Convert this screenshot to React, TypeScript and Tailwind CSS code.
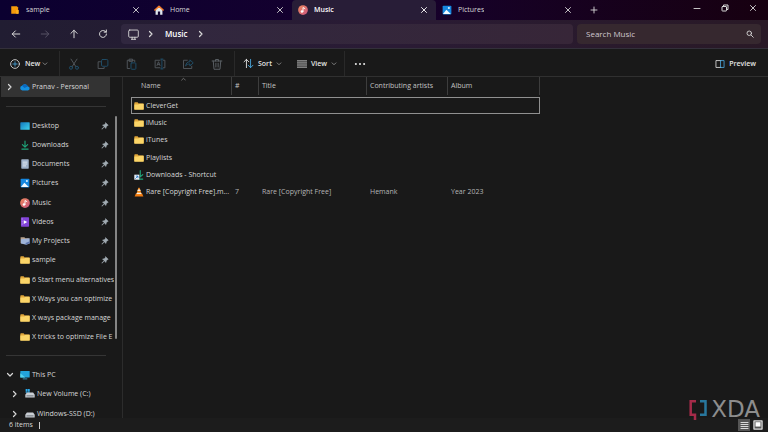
import type { ReactNode } from "react";

type IconProps = { className?: string };

function Svg({ children, className = "size-3", box = 16 }: IconProps & { children: ReactNode; box?: number }) {
  return (
    <svg viewBox={`0 0 ${box} ${box}`} className={`shrink-0 ${className}`} fill="none" stroke="currentColor" strokeWidth="1.3" strokeLinecap="round" strokeLinejoin="round" aria-hidden="true">
      {children}
    </svg>
  );
}

const Close = () => <Svg className="size-2"><path d="M3 3l10 10M13 3l-10 10" strokeWidth="1.800" /></Svg>;
const ChevronRight = ({ className = "size-2" }: IconProps) => <Svg className={className}><path d="M5 3l5 5-5 5" strokeWidth="2.400" /></Svg>;
const ChevronDown = ({ className = "size-2" }: IconProps) => <Svg className={className}><path d="M3 5l5 5 5-5" strokeWidth="2.400" /></Svg>;

const Folder = () => (
  <Svg className="size-[10px]">
    <path d="M.5 3.200c0-.700.500-1.200 1.200-1.200h4L7.500 4h6.800c.700 0 1.200.500 1.200 1.200V13H.5z" fill="#e0a63a" stroke="none" />
    <path d="M.5 5.500h6.500l1.500-1H15.500v8.500c0 .600-.400 1-1 1h-13c-.600 0-1-.400-1-1z" fill="#fbd568" stroke="none" />
  </Svg>
);
const SampleIcon = () => (
  <Svg className="size-[10px]">
    <path d="M2 2h9l2 2v10H2z" fill="#f59a0b" stroke="none" />
    <path d="M10 8h4v6h-4z" fill="#ffb01f" stroke="none" />
  </Svg>
);
const HomeIcon = () => (
  <Svg className="size-[10px]">
    <path d="M2.500 7L8 2.500 13.500 7v8.500H9.800v-5H6.200v5H2.500z" fill="#dfe5ec" stroke="none" />
    <path d="M1.500 8L8 2l6.500 6" stroke="#f27a2a" strokeWidth="2.600" />
  </Svg>
);
const MusicIcon = () => (
  <Svg className="size-[10px]">
    <defs>
      <linearGradient id="music" x1="0" y1="0" x2="1" y2="1"><stop stopColor="#f08a5d" /><stop offset="1" stopColor="#c8557f" /></linearGradient>
    </defs>
    <circle cx="8" cy="8" r="7.800" fill="url(#music)" stroke="none" />
    <circle cx="6.300" cy="10.500" r="2" fill="#fff" stroke="none" />
    <path d="M8 10.500V4l3 1.800" stroke="#fff" strokeWidth="1.500" />
  </Svg>
);
const PicturesIcon = () => (
  <Svg className="size-[10px]">
    <rect x="1" y="1" width="14" height="14" rx="1.500" fill="#1687df" stroke="none" />
    <path d="M1.500 14.500L7 7.500l7 7z" fill="#f2f9ff" stroke="none" />
    <circle cx="11" cy="4.800" r="1.700" fill="#d9f1ff" stroke="none" />
  </Svg>
);
const CloudIcon = () => (
  <Svg className="size-[10px]">
    <path d="M3.800 13.500a3.800 3.800 0 01-.500-7.500A5.200 5.200 0 0112.600 7 3.300 3.300 0 0112.800 13.500z" fill="#1490df" stroke="none" />
    <path d="M3.300 6a5.200 5.200 0 019.300 1L7 9.500z" fill="#0b68bd" stroke="none" />
  </Svg>
);
const DesktopIcon = () => (
  <Svg className="size-[10px]">
    <defs>
      <linearGradient id="desk" x1="0" y1="0" x2="1" y2="1"><stop stopColor="#1277bd" /><stop offset="1" stopColor="#3fd4ef" /></linearGradient>
    </defs>
    <rect x="0.500" y="2" width="15" height="12" rx="1" fill="url(#desk)" stroke="none" />
  </Svg>
);
const DownloadIcon = () => (
  <Svg className="size-[10px]"><path d="M8 1.500v9.500M3.800 7.500L8 11.500l4.200-4M3 14.500h10" stroke="#1fa67a" strokeWidth="1.800" /></Svg>
);
const DocumentsIcon = () => (
  <Svg className="size-[10px]">
    <rect x="2" y="0.500" width="12" height="15" rx="1" fill="#9db1c9" stroke="none" />
    <path d="M5 5h6M5 8h6M5 11h4" stroke="#eef4fa" />
  </Svg>
);
const VideosIcon = () => (
  <Svg className="size-[10px]">
    <rect x="1.500" y="0.500" width="13" height="15" rx="1.200" fill="#8244d8" stroke="none" />
    <path d="M6 5l5.500 3L6 11z" fill="#fff" stroke="none" />
    <path d="M3.500 2.500v11" stroke="#b78cf3" strokeDasharray="1.500 2.500" />
  </Svg>
);
const ProjectsIcon = () => (
  <Svg className="size-[10px]">
    <path d="M1 2h6l1.500 1.500H14v8H1z" fill="#b9a48f" stroke="none" />
    <path d="M1.500 5L15.500 3.500v8.500L10 14 1.500 12z" fill="#9fb4d8" stroke="none" />
    <path d="M9 14l6.500-2.500V8.500L9 11z" fill="#5d74ab" stroke="none" />
  </Svg>
);
const PcIcon = () => (
  <Svg className="size-[10px]">
    <rect x="0.500" y="1.500" width="15" height="10.500" rx="1" fill="#22a3dc" stroke="none" />
    <path d="M.5 12V5l8 7z" fill="#53d2ee" stroke="none" />
    <path d="M5 14.200h6" stroke="#3b8fb5" strokeWidth="1.600" />
  </Svg>
);
const DriveIcon = ({ system }: { system?: boolean }) => (
  <Svg className="size-[10px]">
    {system && <path d="M1 0h3v3H1zM4.600 0h3v3h-3zM1 3.600h3v2.400H1zM4.600 3.600h3v2.400h-3z" fill="#28a8ea" stroke="none" />}
    <path d="M3 5.500h10L15.500 9v4.500H.5V9z" fill="#c9ced4" stroke="none" />
    <path d="M3 11h10" stroke="#4d5359" strokeWidth="1.200" />
  </Svg>
);
const ShortcutIcon = () => (
  <Svg className="size-[10px]">
    <path d="M10 1v9.500M10 11l4-3.500M8 14.500h6" stroke="#1fa67a" strokeWidth="1.800" />
    <rect x="0.500" y="7.500" width="8" height="8" fill="#f2f6fa" stroke="none" />
    <path d="M2.500 13.500l3.500-3.500M3.500 9.700H6.300v2.800" stroke="#1c6fc4" />
  </Svg>
);
const VlcIcon = () => (
  <Svg className="size-[10px]">
    <path d="M3 10.500h10l2 4.500H1z" fill="#f07a10" stroke="none" />
    <path d="M7 1h2l3.500 11.500h-9z" fill="#f58b1c" stroke="none" />
    <path d="M6.200 4h3.600l.8 2.500H5.400zM4.600 9h6.800l.6 2H4z" fill="#f2eee8" stroke="none" />
  </Svg>
);
const PinIcon = () => (
  <Svg className="size-2">
    <path d="M9.500 1.500l5 5-1.500.800-2.500 2.200-.500 3.500L6.700 9.800 2 14.500 1.500 14l4.700-4.700L3 6l3.500-.500L8.700 3z" fill="#a1abb2" stroke="#a1abb2" strokeWidth="1" />
  </Svg>
);

type Tab = { label: string; icon: ReactNode; active?: boolean };
const tabs: Tab[] = [
  { label: "sample", icon: <SampleIcon /> },
  { label: "Home", icon: <HomeIcon /> },
  { label: "Music", icon: <MusicIcon />, active: true },
  { label: "Pictures", icon: <PicturesIcon /> },
];

const quickAccess: { label: string; icon: ReactNode; pinned?: boolean }[] = [
  { label: "Desktop", icon: <DesktopIcon />, pinned: true },
  { label: "Downloads", icon: <DownloadIcon />, pinned: true },
  { label: "Documents", icon: <DocumentsIcon />, pinned: true },
  { label: "Pictures", icon: <PicturesIcon />, pinned: true },
  { label: "Music", icon: <MusicIcon />, pinned: true },
  { label: "Videos", icon: <VideosIcon />, pinned: true },
  { label: "My Projects", icon: <ProjectsIcon />, pinned: true },
  { label: "sample", icon: <Folder />, pinned: true },
  { label: "6 Start menu alternatives", icon: <Folder /> },
  { label: "X Ways you can optimize", icon: <Folder /> },
  { label: "X ways package manage", icon: <Folder /> },
  { label: "X tricks to optimize File E", icon: <Folder /> },
];

const files: { name: string; icon: ReactNode; selected?: boolean; num?: string; title?: string; artist?: string; album?: string }[] = [
  { name: "CleverGet", icon: <Folder />, selected: true },
  { name: "iMusic", icon: <Folder /> },
  { name: "iTunes", icon: <Folder /> },
  { name: "Playlists", icon: <Folder /> },
  { name: "Downloads - Shortcut", icon: <ShortcutIcon /> },
  { name: "Rare [Copyright Free].m...", icon: <VlcIcon />, num: "7", title: "Rare [Copyright Free]", artist: "Hemank", album: "Year 2023" },
];

const toolIcons: { label: string; icon: ReactNode }[] = [
  { label: "Cut", icon: <Svg><path d="M4 1.500l6.500 10M12 1.500l-6.500 10" stroke="#50555a" /><circle cx="4" cy="13" r="2" stroke="#204d68" /><circle cx="12" cy="13" r="2" stroke="#204d68" /></Svg> },
  { label: "Copy", icon: <Svg><path d="M4.500 5H1.500v9h8v-1.500" stroke="#50555a" /><rect x="6" y="2" width="8.500" height="9" rx="1.500" stroke="#204d68" /></Svg> },
  { label: "Paste", icon: <Svg><path d="M6 14H3V3h10v2M6 1.500h4v3H6z" stroke="#50555a" /><rect x="8" y="6.500" width="6.500" height="8.500" rx="1" stroke="#204d68" /></Svg> },
  { label: "Rename", icon: <Svg><path d="M8 3H1.500v10H8M12.500 3h2v10h-2M4 10l2-5 2 5M4.500 8.500h3" stroke="#50555a" /><path d="M10.500 1.500v13M9 1.500h3M9 14.500h3" stroke="#204d68" /></Svg> },
  { label: "Share", icon: <Svg><path d="M7 3H2v11h11v-3" stroke="#50555a" /><path d="M5 10c.500-3.500 2.500-5 5.500-5V2.500L15 6.500l-4.500 4V8C8 8 6.500 8.500 5 10z" stroke="#204d68" /></Svg> },
  { label: "Delete", icon: <Svg><path d="M1.500 4h13M6 4V2h4v2M3 4l1 11h8l1-11M6.500 7v5M9.500 7v5" stroke="#5c6166" /></Svg> },
];

const iconButton = "flex size-5 items-center justify-center";
const windowButton = "flex w-7 items-center justify-center pb-1";

export default function App() {
  return (
    <div className="flex h-screen min-h-[300px] flex-col overflow-hidden bg-[#191919] font-['Open_Sans','Noto_Sans',sans-serif] text-[7px] leading-3 text-[#d8d8d8]">
      <header className="shrink-0">
        <div className="flex h-5 bg-linear-to-r from-[#0b0030] via-[#16002e] to-[#170010] pr-px pl-1">
          <div role="tablist" className="flex w-[576px] min-w-0 shrink">
            {tabs.map((tab) => (
              <div
                key={tab.label}
                className={`flex min-w-0 flex-1 items-center pr-2 pl-[6px] ${tab.active ? "rounded-t-sm bg-[#281d37] font-semibold text-white" : ""}`}
              >
                <button role="tab" aria-selected={!!tab.active} className="flex min-w-0 flex-1 items-center gap-[6px] text-left">
                  {tab.icon}
                  <span className="truncate">{tab.label}</span>
                </button>
                <button aria-label={`Close ${tab.label}`}><Close /></button>
              </div>
            ))}
          </div>
          <button aria-label="New tab" className="flex w-7 items-center justify-center">
            <Svg className="size-2"><path d="M8 2v12M2 8h12" strokeWidth="1.800" /></Svg>
          </button>
          <div className="ml-auto flex">
            <button aria-label="Minimize" className={windowButton}><Svg className="size-2"><path d="M2 9h12" strokeWidth="1.800" /></Svg></button>
            <button aria-label="Restore" className={windowButton}><Svg className="size-2"><path d="M5 4V2h9v9h-2" strokeWidth="2" /><rect x="2" y="5" width="9" height="9" rx="1" strokeWidth="2" /></Svg></button>
            <button aria-label="Close window" className={windowButton}><Close /></button>
          </div>
        </div>

        <div className="flex h-[29px] items-center gap-1 border-b border-[#33303a] bg-linear-to-r from-[#211d32] via-[#2a1b35] to-[#291926] pr-[7px] pl-[6px]">
          <nav aria-label="History" className="flex w-[111px] shrink-0 justify-between pr-1">
            <button aria-label="Back" className={iconButton}><Svg className="size-[10px]"><path d="M14 8H2M7 3L2 8l5 5" strokeWidth="1.600" /></Svg></button>
            <button aria-label="Forward" className={`${iconButton} text-[#575265]`}><Svg className="size-[10px]"><path d="M2 8h12M9 3l5 5-5 5" strokeWidth="1.600" /></Svg></button>
            <button aria-label="Up" className={iconButton}><Svg className="size-[10px]"><path d="M8 14V2M3 7l5-5 5 5" strokeWidth="1.600" /></Svg></button>
            <button aria-label="Refresh" className={iconButton}><Svg className="size-[10px]"><path d="M13.500 8a5.500 5.500 0 11-2-4.300L13 5M13.300 1.500V5H9.800" strokeWidth="1.600" /></Svg></button>
          </nav>
          <div className="flex h-5 min-w-0 flex-1 items-center rounded-sm bg-linear-to-r from-[#30273f] to-[#372638] pl-[7px]">
            <Svg className="size-[11px]"><rect x="1" y="1.500" width="14" height="10.500" rx="1.500" /><path d="M5 15h6M6 12v3M10 12v3" /></Svg>
            <span className="ml-2"><ChevronRight /></span>
            <button className="ml-[10px] text-[8px] font-semibold text-white">Music</button>
            <span className="ml-[9px]"><ChevronRight /></span>
          </div>
          <label className="flex h-5 w-[184px] shrink-0 items-center rounded-sm bg-[#36282f] pr-[7px] pl-[9px]">
            <input aria-label="Search Music" placeholder="Search Music" className="min-w-0 flex-1 bg-transparent text-[8px] outline-none placeholder:text-[#d0c8cf]" />
            <Svg className="size-2"><circle cx="6.500" cy="6.500" r="4.500" strokeWidth="1.800" /><path d="M10 10l4.500 4.500" strokeWidth="1.800" /></Svg>
          </label>
        </div>
      </header>

      <div role="toolbar" aria-label="Commands" className="flex h-7 shrink-0 items-center border-b border-[#303030] pt-[2px] font-semibold text-[#e4e4e4]">
        <button className="flex w-[59px] items-center pl-[10px]">
          <Svg className="size-[10px]"><circle cx="8" cy="8" r="7" /><path d="M8 4.500v7M4.500 8h7" stroke="#4aa9e0" /></Svg>
          <span className="ml-[5px] flex items-center gap-[2px]">New<ChevronDown className="size-[6px] text-[#8c8c8c]" /></span>
        </button>
        <div className="h-full w-px bg-[#292929]" />
        <div className="flex w-[174px] justify-around pr-[3px]">
          {toolIcons.map((tool) => (
            <button key={tool.label} aria-label={tool.label} className="p-1" disabled>{tool.icon}</button>
          ))}
        </div>
        <div className="h-full w-px bg-[#292929]" />
        <button className="flex w-[60px] items-center gap-1 pl-2">
          <Svg className="size-[11px]"><path d="M5 14V2M1.500 5.500L5 2l3.500 3.500" /><path d="M11 2v12M7.500 10.500L11 14l3.500-3.500" stroke="#4aa9e0" /></Svg>
          Sort
          <ChevronDown className="size-[6px] text-[#8c8c8c]" />
        </button>
        <button className="flex w-[49px] items-center gap-1 pl-[2px]">
          <Svg className="size-[10px]"><path d="M0 3h16M0 6.300h16M0 9.600h16M0 13h16" strokeLinecap="butt" /></Svg>
          View
          <ChevronDown className="size-[6px] text-[#8c8c8c]" />
        </button>
        <div className="h-full w-px bg-[#292929]" />
        <button aria-label="See more" className="pl-[9px]">
          <Svg className="size-3"><path d="M2.500 8h.01M8 8h.01M13.500 8h.01" strokeWidth="2.800" /></Svg>
        </button>
        <button className="mr-3 ml-auto flex items-center gap-1">
          <Svg className="size-[10px]"><path d="M9.500 2.500h-8v11h8" /><path d="M9.500 2.500h5v11h-5z" stroke="#4aa9e0" /></Svg>
          Preview
        </button>
      </div>

      <div className="flex min-h-0 flex-1">
        <nav aria-label="Folders" className="flex w-[123px] shrink-0 flex-col overflow-hidden border-r border-[#2c2c2c]">
          <button className="mr-3 ml-px flex h-5 shrink-0 items-center bg-[#333333] pl-[5px]">
            <ChevronRight />
            <span className="ml-[6px] flex items-center gap-[2px]"><CloudIcon />Pranav - Personal</span>
          </button>
          <div className="mt-[9px] mr-4 ml-[6px] h-px shrink-0 bg-[#353535]" />
          <div className="mt-[9px] flex h-[231px] shrink-0 justify-between pr-[5px]">
            <ul className="grid w-[114px] grid-rows-12 pl-5">
              {quickAccess.map((item) => (
                <li key={item.label} className="flex min-w-0 items-center">
                  <button className="flex min-w-0 flex-1 items-center gap-[2px] overflow-hidden whitespace-nowrap">{item.icon}{item.label}</button>
                  {item.pinned && <span className="pr-[5px]"><PinIcon /></span>}
                </li>
              ))}
            </ul>
            <div className="mb-2 w-[2px] rounded-full bg-[#858585]" />
          </div>
          <div className="mt-2 mr-4 ml-[6px] h-px shrink-0 bg-[#353535]" />
          <ul className="mt-[9px] shrink-0">
            <li>
              <button className="flex h-[19px] items-center pl-[6px]"><ChevronDown /><span className="ml-[6px] flex items-center gap-[2px]"><PcIcon />This PC</span></button>
            </li>
            <li>
              <button className="flex h-5 items-center pl-[11px]"><ChevronRight /><span className="ml-[6px] flex items-center gap-[2px]"><DriveIcon system />New Volume (C:)</span></button>
            </li>
            <li>
              <button className="flex h-[19px] items-center pl-[11px]"><ChevronRight /><span className="ml-[6px] flex items-center gap-[2px]"><DriveIcon />Windows-SSD (D:)</span></button>
            </li>
          </ul>
        </nav>

        <main className="min-w-0 flex-1 overflow-hidden pl-2">
          <table className="h-[124px] w-[409px] table-fixed border-collapse text-left">
            <colgroup>
              <col className="w-[101px]" /><col className="w-[27px]" /><col className="w-[108px]" /><col className="w-[81px]" /><col className="w-[92px]" />
            </colgroup>
            <thead className="text-[#c4c4c4]">
              <tr className="h-5">
                {["Name", "#", "Title", "Contributing artists", "Album"].map((heading, i) => (
                  <th key={heading} scope="col" className="p-0 align-top font-normal">
                    <div className={`relative flex h-[18px] items-center border-r border-[#3d3d3d] whitespace-nowrap ${i === 0 ? "pl-[10px]" : "pl-[3px]"}`}>
                      {heading}
                      {i === 0 && <Svg className="absolute top-0 left-1/2 size-[5px] text-[#909090]"><path d="M2 10l6-6 6 6" strokeWidth="2.200" /></Svg>}
                    </div>
                  </th>
                ))}
              </tr>
            </thead>
            <tbody>
              {files.map((file) => (
                <tr key={file.name} className={`h-[17px] ${file.selected ? "outline outline-1 -outline-offset-1 outline-[#909090]" : ""}`}>
                  <td className="p-0 pl-[3px]"><span className="flex items-center gap-[2px] whitespace-nowrap">{file.icon}{file.name}</span></td>
                  <td className="p-0 pl-[3px] text-[#b5b5b5]">{file.num}</td>
                  <td className="p-0 pl-[3px] whitespace-nowrap text-[#b5b5b5]">{file.title}</td>
                  <td className="p-0 pl-[3px] text-[#b5b5b5]">{file.artist}</td>
                  <td className="p-0 pl-[3px] text-[#b5b5b5]">{file.album}</td>
                </tr>
              ))}
            </tbody>
          </table>
        </main>
      </div>

      <footer className="relative flex h-[14px] shrink-0 items-center bg-[#1c1c1c] pr-1 pl-[9px]">
        <span>6 items</span>
        <span className="ml-[6px] h-[7px] w-px bg-[#cfcfcf]" />
        <div className="ml-auto flex items-center gap-[2px]">
          <button aria-label="Details view" className="flex size-3 items-center justify-center bg-[#555555]">
            <Svg className="size-[9px]"><path d="M1 2.500h14M1 6.200h14M1 9.800h14M1 13.500h14" strokeWidth="1.800" strokeLinecap="butt" /></Svg>
          </button>
          <button aria-label="Large icons view" className="flex size-3 items-center justify-center">
            <Svg className="size-[10px]"><rect x="1.500" y="1.500" width="13" height="13" fill="#555" stroke="#ddd" strokeWidth="2" /><rect x="4" y="3.500" width="8" height="7" fill="#fff" stroke="none" /></Svg>
          </button>
        </div>
        <div className="absolute right-2 bottom-[11px] flex items-start gap-1 text-[#8d8d8d]">
          <svg viewBox="0 0 18 22" className="h-[22px] w-[18px]" fill="none" strokeWidth="2.500" aria-hidden="true">
            <path d="M7 2.200H1.700v13.600h4.300v5.200" stroke="#a52b49" />
            <path d="M11 2.200h5.500v13.600H11" stroke="#28779d" />
          </svg>
          <span className="font-['DejaVu_Sans',sans-serif] text-[23px] leading-5">XDA</span>
        </div>
      </footer>
    </div>
  );
}
